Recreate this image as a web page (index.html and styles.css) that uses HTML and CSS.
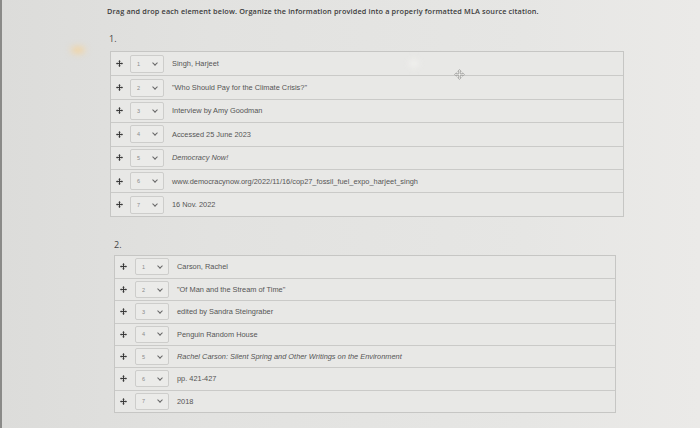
FILE: index.html
```html
<!DOCTYPE html>
<html>
<head>
<meta charset="utf-8">
<link rel="stylesheet" href="styles.css">
</head>
<body>
<div class="screen">
  <div class="glare glare-orange"></div>
  <div class="glare glare-white"></div>
  <svg class="move-cursor" viewBox="0 0 12 12" width="11" height="11">
    <path d="M6 0.6 L7.8 2.6 L6.8 2.6 L6.8 5.2 L9.4 5.2 L9.4 4.2 L11.4 6 L9.4 7.8 L9.4 6.8 L6.8 6.8 L6.8 9.4 L7.8 9.4 L6 11.4 L4.2 9.4 L5.2 9.4 L5.2 6.8 L2.6 6.8 L2.6 7.8 L0.6 6 L2.6 4.2 L2.6 5.2 L5.2 5.2 L5.2 2.6 L4.2 2.6 Z" fill="#f4f4f2" stroke="#8a8a88" stroke-width="0.7" stroke-linejoin="round"/>
  </svg>

  <main class="page">
    <p class="instr">Drag and drop each element below. Organize the information provided into a properly formatted MLA source citation.</p>

    <section class="question q1">
      <div class="qnum">1.</div>
      <ol class="list list-1">
        <li class="row"><span class="handle"><svg viewBox="0 0 8 8" width="7" height="7"><path d="M4 0 L5.4 1.6 L2.6 1.6 Z M4 8 L5.4 6.4 L2.6 6.4 Z M0 4 L1.6 2.6 L1.6 5.4 Z M8 4 L6.4 2.6 L6.4 5.4 Z" fill="#3a3a3a"/><path d="M4 1 V7 M1 4 H7" stroke="#3a3a3a" stroke-width="1.3"/></svg></span><span class="select"><span class="num">1</span><span class="chev"></span></span><span class="text">Singh, Harjeet</span></li>
        <li class="row"><span class="handle"><svg viewBox="0 0 8 8" width="7" height="7"><path d="M4 0 L5.4 1.6 L2.6 1.6 Z M4 8 L5.4 6.4 L2.6 6.4 Z M0 4 L1.6 2.6 L1.6 5.4 Z M8 4 L6.4 2.6 L6.4 5.4 Z" fill="#3a3a3a"/><path d="M4 1 V7 M1 4 H7" stroke="#3a3a3a" stroke-width="1.3"/></svg></span><span class="select"><span class="num">2</span><span class="chev"></span></span><span class="text">"Who Should Pay for the Climate Crisis?"</span></li>
        <li class="row"><span class="handle"><svg viewBox="0 0 8 8" width="7" height="7"><path d="M4 0 L5.4 1.6 L2.6 1.6 Z M4 8 L5.4 6.4 L2.6 6.4 Z M0 4 L1.6 2.6 L1.6 5.4 Z M8 4 L6.4 2.6 L6.4 5.4 Z" fill="#3a3a3a"/><path d="M4 1 V7 M1 4 H7" stroke="#3a3a3a" stroke-width="1.3"/></svg></span><span class="select"><span class="num">3</span><span class="chev"></span></span><span class="text">Interview by Amy Goodman</span></li>
        <li class="row"><span class="handle"><svg viewBox="0 0 8 8" width="7" height="7"><path d="M4 0 L5.4 1.6 L2.6 1.6 Z M4 8 L5.4 6.4 L2.6 6.4 Z M0 4 L1.6 2.6 L1.6 5.4 Z M8 4 L6.4 2.6 L6.4 5.4 Z" fill="#3a3a3a"/><path d="M4 1 V7 M1 4 H7" stroke="#3a3a3a" stroke-width="1.3"/></svg></span><span class="select"><span class="num">4</span><span class="chev"></span></span><span class="text">Accessed 25 June 2023</span></li>
        <li class="row"><span class="handle"><svg viewBox="0 0 8 8" width="7" height="7"><path d="M4 0 L5.4 1.6 L2.6 1.6 Z M4 8 L5.4 6.4 L2.6 6.4 Z M0 4 L1.6 2.6 L1.6 5.4 Z M8 4 L6.4 2.6 L6.4 5.4 Z" fill="#3a3a3a"/><path d="M4 1 V7 M1 4 H7" stroke="#3a3a3a" stroke-width="1.3"/></svg></span><span class="select"><span class="num">5</span><span class="chev"></span></span><span class="text italic">Democracy Now!</span></li>
        <li class="row"><span class="handle"><svg viewBox="0 0 8 8" width="7" height="7"><path d="M4 0 L5.4 1.6 L2.6 1.6 Z M4 8 L5.4 6.4 L2.6 6.4 Z M0 4 L1.6 2.6 L1.6 5.4 Z M8 4 L6.4 2.6 L6.4 5.4 Z" fill="#3a3a3a"/><path d="M4 1 V7 M1 4 H7" stroke="#3a3a3a" stroke-width="1.3"/></svg></span><span class="select"><span class="num">6</span><span class="chev"></span></span><span class="text">www.democracynow.org/2022/11/16/cop27_fossil_fuel_expo_harjeet_singh</span></li>
        <li class="row"><span class="handle"><svg viewBox="0 0 8 8" width="7" height="7"><path d="M4 0 L5.4 1.6 L2.6 1.6 Z M4 8 L5.4 6.4 L2.6 6.4 Z M0 4 L1.6 2.6 L1.6 5.4 Z M8 4 L6.4 2.6 L6.4 5.4 Z" fill="#3a3a3a"/><path d="M4 1 V7 M1 4 H7" stroke="#3a3a3a" stroke-width="1.3"/></svg></span><span class="select"><span class="num">7</span><span class="chev"></span></span><span class="text">16 Nov. 2022</span></li>
      </ol>
    </section>

    <section class="question q2">
      <div class="qnum">2.</div>
      <ol class="list list-2">
        <li class="row"><span class="handle"><svg viewBox="0 0 8 8" width="7" height="7"><path d="M4 0 L5.4 1.6 L2.6 1.6 Z M4 8 L5.4 6.4 L2.6 6.4 Z M0 4 L1.6 2.6 L1.6 5.4 Z M8 4 L6.4 2.6 L6.4 5.4 Z" fill="#3a3a3a"/><path d="M4 1 V7 M1 4 H7" stroke="#3a3a3a" stroke-width="1.3"/></svg></span><span class="select"><span class="num">1</span><span class="chev"></span></span><span class="text">Carson, Rachel</span></li>
        <li class="row"><span class="handle"><svg viewBox="0 0 8 8" width="7" height="7"><path d="M4 0 L5.4 1.6 L2.6 1.6 Z M4 8 L5.4 6.4 L2.6 6.4 Z M0 4 L1.6 2.6 L1.6 5.4 Z M8 4 L6.4 2.6 L6.4 5.4 Z" fill="#3a3a3a"/><path d="M4 1 V7 M1 4 H7" stroke="#3a3a3a" stroke-width="1.3"/></svg></span><span class="select"><span class="num">2</span><span class="chev"></span></span><span class="text">"Of Man and the Stream of Time"</span></li>
        <li class="row"><span class="handle"><svg viewBox="0 0 8 8" width="7" height="7"><path d="M4 0 L5.4 1.6 L2.6 1.6 Z M4 8 L5.4 6.4 L2.6 6.4 Z M0 4 L1.6 2.6 L1.6 5.4 Z M8 4 L6.4 2.6 L6.4 5.4 Z" fill="#3a3a3a"/><path d="M4 1 V7 M1 4 H7" stroke="#3a3a3a" stroke-width="1.3"/></svg></span><span class="select"><span class="num">3</span><span class="chev"></span></span><span class="text">edited by Sandra Steingraber</span></li>
        <li class="row"><span class="handle"><svg viewBox="0 0 8 8" width="7" height="7"><path d="M4 0 L5.4 1.6 L2.6 1.6 Z M4 8 L5.4 6.4 L2.6 6.4 Z M0 4 L1.6 2.6 L1.6 5.4 Z M8 4 L6.4 2.6 L6.4 5.4 Z" fill="#3a3a3a"/><path d="M4 1 V7 M1 4 H7" stroke="#3a3a3a" stroke-width="1.3"/></svg></span><span class="select"><span class="num">4</span><span class="chev"></span></span><span class="text">Penguin Random House</span></li>
        <li class="row"><span class="handle"><svg viewBox="0 0 8 8" width="7" height="7"><path d="M4 0 L5.4 1.6 L2.6 1.6 Z M4 8 L5.4 6.4 L2.6 6.4 Z M0 4 L1.6 2.6 L1.6 5.4 Z M8 4 L6.4 2.6 L6.4 5.4 Z" fill="#3a3a3a"/><path d="M4 1 V7 M1 4 H7" stroke="#3a3a3a" stroke-width="1.3"/></svg></span><span class="select"><span class="num">5</span><span class="chev"></span></span><span class="text italic">Rachel Carson: Silent Spring and Other Writings on the Environment</span></li>
        <li class="row"><span class="handle"><svg viewBox="0 0 8 8" width="7" height="7"><path d="M4 0 L5.4 1.6 L2.6 1.6 Z M4 8 L5.4 6.4 L2.6 6.4 Z M0 4 L1.6 2.6 L1.6 5.4 Z M8 4 L6.4 2.6 L6.4 5.4 Z" fill="#3a3a3a"/><path d="M4 1 V7 M1 4 H7" stroke="#3a3a3a" stroke-width="1.3"/></svg></span><span class="select"><span class="num">6</span><span class="chev"></span></span><span class="text">pp. 421-427</span></li>
        <li class="row"><span class="handle"><svg viewBox="0 0 8 8" width="7" height="7"><path d="M4 0 L5.4 1.6 L2.6 1.6 Z M4 8 L5.4 6.4 L2.6 6.4 Z M0 4 L1.6 2.6 L1.6 5.4 Z M8 4 L6.4 2.6 L6.4 5.4 Z" fill="#3a3a3a"/><path d="M4 1 V7 M1 4 H7" stroke="#3a3a3a" stroke-width="1.3"/></svg></span><span class="select"><span class="num">7</span><span class="chev"></span></span><span class="text">2018</span></li>
      </ol>
    </section>
  </main>
</div>
</body>
</html>
```

FILE: styles.css
```css
* { box-sizing: border-box; }

html, body {
  margin: 0;
  padding: 0;
  width: 700px;
  height: 428px;
  overflow: hidden;
}

body {
  background: linear-gradient(90deg, #dcdcda 0%, #e2e2e0 30%, #e6e6e4 75%, #ebeae8 100%);
  font-family: "Liberation Sans", Arial, sans-serif;
}

.screen {
  position: relative;
  width: 700px;
  height: 428px;
  border-left: 2px solid #8a8a88;
}

.glare {
  position: absolute;
  border-radius: 50%;
  filter: blur(3px);
}
.glare-orange {
  left: 68px;
  top: 46px;
  width: 16px;
  height: 8px;
  background: radial-gradient(ellipse, #f3cf90 0%, #f1d6a8 45%, rgba(240, 220, 190, 0) 100%);
}
.glare-white {
  left: 406px;
  top: 59px;
  width: 12px;
  height: 9px;
  background: radial-gradient(ellipse, #f7f6f3 0%, rgba(245, 244, 240, 0) 100%);
}

.move-cursor {
  position: absolute;
  left: 452px;
  top: 69px;
}

.page {
  padding: 5px 0 0 105px;
}

.instr {
  margin: 0;
  font-family: "Open Sans", sans-serif;
  font-weight: 600;
  font-size: 7.3px;
  line-height: 12px;
  color: #3c3c3c;
  letter-spacing: 0.02em;
}

.qnum {
  font-family: "Open Sans", sans-serif;
  font-size: 9px;
  line-height: 12px;
  color: #444;
}

.q1 .qnum {
  margin: 16px 0 0 2px;
}

.q2 .qnum {
  margin: 22px 0 0 7px;
}

.list {
  list-style: none;
  margin: 0;
  padding: 0;
  border: 1px solid #c6c6c4;
  background: #e8e8e6;
}

.list-1 {
  margin: 6px 0 0 3px;
  width: 514px;
}

.list-2 {
  margin: 4px 0 0 7px;
  width: 502px;
}

.row {
  display: flex;
  align-items: center;
  border-top: 1px solid #cacac8;
}
.row:first-child { border-top: none; }

.list-1 .row { height: 23.4px; }
.list-2 .row { height: 22.3px; }

.handle {
  display: flex;
  margin-left: 5px;
  width: 7px;
}

.select {
  display: flex;
  align-items: center;
  justify-content: space-between;
  margin-left: 7px;
  width: 34px;
  height: 18px;
  padding: 0 6px 0 6px;
  border: 1px solid #cdcdcb;
  border-radius: 2px;
  background: #ebebe9;
}
.list-2 .select { height: 17px; margin-left: 8px; }

.num {
  font-size: 5.5px;
  color: #8a8a8a;
}

.chev {
  width: 4px;
  height: 4px;
  border-right: 1.1px solid #666;
  border-bottom: 1.1px solid #666;
  transform: rotate(45deg);
  margin-top: -2px;
}

.text {
  margin-left: 8px;
  font-size: 7.4px;
  color: #555555;
  white-space: nowrap;
}

.italic { font-style: italic; }
```
